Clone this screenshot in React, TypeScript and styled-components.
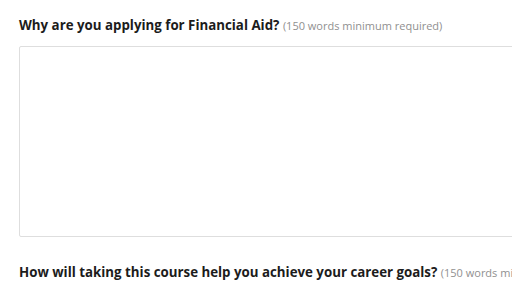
import React from 'react'
import styled, { createGlobalStyle } from 'styled-components'

const GlobalStyle = createGlobalStyle`
  html, body {
    margin: 0;
    padding: 0;
    background: #ffffff;
    overflow: hidden;
  }
  body {
    font-family: "Open Sans", "Liberation Sans", sans-serif;
    color: #1f1f1f;
  }
`

const Form = styled.form`
  width: 640px;
  padding: 16px 0 0 19px;
  display: flex;
  flex-direction: column;
  gap: 26px;
`

const Field = styled.div`
  display: flex;
  flex-direction: column;
`

const Question = styled.label`
  font-size: 13.3px;
  font-weight: 700;
  line-height: 18px;
  color: #1c1c1c;
  white-space: nowrap;
  margin-bottom: 11px;
`

const Hint = styled.span`
  font-size: 11px;
  font-weight: 400;
  color: #909090;
`

const Answer = styled.textarea`
  box-sizing: border-box;
  width: 620px;
  height: 191px;
  border: 1px solid #dedede;
  border-radius: 2px;
  resize: none;
  font-family: inherit;
  outline: none;
`

const questions = [
  'Why are you applying for Financial Aid?',
  'How will taking this course help you achieve your career goals?',
]

export default function App() {
  return (
    <>
      <GlobalStyle />
      <Form>
        {questions.map((q) => (
          <Field key={q}>
            <Question>
              {q} <Hint>(150 words minimum required)</Hint>
            </Question>
            <Answer />
          </Field>
        ))}
      </Form>
    </>
  )
}
